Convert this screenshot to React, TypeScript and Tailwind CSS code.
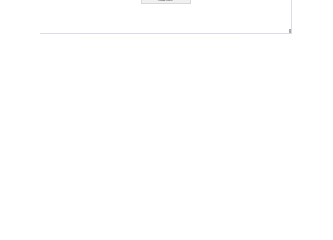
export default function App() {
  return (
    <div className="w-[333px] h-[222px] bg-white font-['Liberation_Sans',sans-serif]">
      <div className="ml-[40px] w-[252px] h-[34px] border-r border-b border-[#dcdce6] relative flex justify-center">
        <button className="-mt-[3px] h-[7px] w-[50px] bg-[#f0f0f0] border border-[#d8d8d8] text-[3px] leading-[5px] text-[#333] whitespace-nowrap">
          Load more
        </button>
        <span className="absolute right-0 bottom-0 w-[2px] h-[4px] bg-[#aaa]" />
      </div>
      <div className="ml-[80px] w-[160px] h-px mt-[3px] bg-[#fdfcf6]" />
    </div>
  );
}
